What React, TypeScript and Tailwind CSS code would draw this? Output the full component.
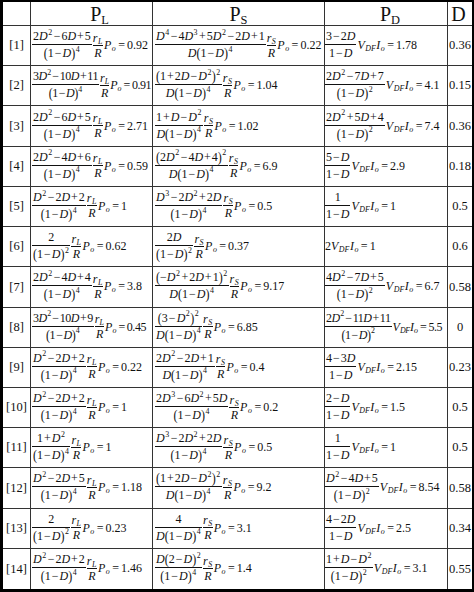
import React from "react";

type Frac3 = [string, string, string];
type Row = {
  pl: Frac3;
  ps: Frac3;
  pd: { n?: string; d?: string; pre?: string; v: string };
  d: string;
  tightL?: boolean;
  tightD?: boolean;
};

const rows: Row[] = [
  { pl: ["2D^2-6D+5", "(1-D)^4", "0.92"], ps: ["D^4-4D^3+5D^2-2D+1", "D(1-D)^4", "0.22"], pd: { n: "3-2D", d: "1-D", v: "1.78" }, d: "0.36" },
  { pl: ["3D^2-10D+11", "(1-D)^4", "0.91"], ps: ["(1+2D-D^2)^2", "D(1-D)^4", "1.04"], pd: { n: "2D^2-7D+7", d: "(1-D)^2", v: "4.1" }, d: "0.15", tightL: true },
  { pl: ["2D^2-6D+5", "(1-D)^4", "2.71"], ps: ["1+D-D^2", "D(1-D)^4", "1.02"], pd: { n: "2D^2+5D+4", d: "(1-D)^2", v: "7.4" }, d: "0.36" },
  { pl: ["2D^2-4D+6", "(1-D)^4", "0.59"], ps: ["(2D^2-4D+4)^2", "D(1-D)^4", "6.9"], pd: { n: "5-D", d: "1-D", v: "2.9" }, d: "0.18" },
  { pl: ["D^2-2D+2", "(1-D)^4", "1"], ps: ["D^3-2D^2+2D", "(1-D)^4", "0.5"], pd: { n: "1", d: "1-D", v: "1" }, d: "0.5" },
  { pl: ["2", "(1-D)^2", "0.62"], ps: ["2D", "(1-D)^2", "0.37"], pd: { pre: "2", v: "1" }, d: "0.6" },
  { pl: ["2D^2-4D+4", "(1-D)^4", "3.8"], ps: ["(-D^2+2D+1)^2", "D(1-D)^4", "9.17"], pd: { n: "4D^2-7D+5", d: "(1-D)^2", v: "6.7" }, d: "0.58" },
  { pl: ["3D^2-10D+9", "(1-D)^4", "0.45"], ps: ["(3-D^2)^2", "D(1-D)^4", "6.85"], pd: { n: "2D^2-11D+11", d: "(1-D)^2", v: "5.5" }, d: "0", tightL: true, tightD: true },
  { pl: ["D^2-2D+2", "(1-D)^4", "0.22"], ps: ["2D^2-2D+1", "D(1-D)^4", "0.4"], pd: { n: "4-3D", d: "1-D", v: "2.15" }, d: "0.23" },
  { pl: ["D^2-2D+2", "(1-D)^4", "1"], ps: ["2D^3-6D^2+5D", "(1-D)^4", "0.2"], pd: { n: "2-D", d: "1-D", v: "1.5" }, d: "0.5" },
  { pl: ["1+D^2", "(1-D)^4", "1"], ps: ["D^3-2D^2+2D", "(1-D)^4", "0.5"], pd: { n: "1", d: "1-D", v: "1" }, d: "0.5" },
  { pl: ["D^2-2D+5", "(1-D)^4", "1.18"], ps: ["(1+2D-D^2)^2", "D(1-D)^4", "9.2"], pd: { n: "D^2-4D+5", d: "(1-D)^2", v: "8.54" }, d: "0.58" },
  { pl: ["2", "(1-D)^2", "0.23"], ps: ["4", "D(1-D)^4", "3.1"], pd: { n: "4-2D", d: "1-D", v: "2.5" }, d: "0.34" },
  { pl: ["D^2-2D+2", "(1-D)^4", "1.46"], ps: ["D(2-D)^2", "(1-D)^4", "1.4"], pd: { n: "1+D-D^2", d: "(1-D)^2", v: "3.1" }, d: "0.55" },
];

// tiny renderer: letters italic, ^digits superscript, _X or _{XY} subscript
function Expr({ s }: { s: string }) {
  const out: React.ReactNode[] = [];
  let i = 0;
  let k = 0;
  let prev = "";
  while (i < s.length) {
    const c = s[i];
    if (c === "^") {
      let j = i + 1;
      while (j < s.length && /\d/.test(s[j])) j++;
      out.push(
        <sup key={k++} className="text-[0.66em] ml-[0.5px] mr-[0.5px] top-[-0.68em]">
          {s.slice(i + 1, j)}
        </sup>
      );
      i = j;
      prev = "^";
      continue;
    }
    if (c === "_") {
      let txt = s[i + 1];
      let j = i + 2;
      if (txt === "{") {
        const e = s.indexOf("}", i);
        txt = s.slice(i + 2, e);
        j = e + 1;
      }
      out.push(
        <sub key={k++} className="text-[0.66em] italic ml-[0.5px] mr-[0.5px]">
          {txt}
        </sub>
      );
      i = j;
      prev = "_";
      continue;
    }
    if (c === "+" || c === "-") {
      const unary = prev === "" || prev === "(";
      out.push(
        <span key={k++} className={unary ? "" : "mx-[1px]"}>
          {c === "-" ? "\u2212" : "+"}
        </span>
      );
    } else if (c === "=") {
      out.push(
        <span key={k++} className="mx-[2px]">
          =
        </span>
      );
    } else if (c === "(" || c === ")") {
      out.push(
        <span key={k++} className="inline-block scale-y-[1.22]">
          {c}
        </span>
      );
    } else if (/[A-Za-z]/.test(c)) {
      out.push(<i key={k++}>{c}</i>);
    } else {
      out.push(<span key={k++}>{c}</span>);
    }
    prev = c;
    i++;
  }
  return <>{out}</>;
}

function Frac({ n, d, small }: { n: string; d: string; small?: boolean }) {
  return (
    <span className="inline-flex flex-col items-center mr-[1px]">
      <span className={small ? "leading-[13px]" : "leading-[15px] px-[1px]"}>
        <Expr s={n} />
      </span>
      <span className="w-full border-t border-[#111]" />
      <span className={small ? "leading-[14px]" : "leading-[17px] px-[1px]"}>
        <Expr s={d} />
      </span>
    </span>
  );
}

function Tail({ s }: { s: string }) {
  return (
    <span className="leading-[15px] whitespace-nowrap">
      <Expr s={s} />
    </span>
  );
}

const cell = "flex items-center border-r border-b border-[#333] overflow-hidden whitespace-nowrap";

export default function App() {
  return (
    <div
      className="w-[474px] h-[592px] bg-white text-[#111] border-l-[3px] border-t-2 border-r-2 border-b-[3px] border-black grid grid-cols-[28px_122px_172px_123px_24px] grid-rows-[24px_repeat(14,1fr)] text-[12px]"
      style={{ fontFamily: '"Liberation Serif", "Times New Roman", serif' }}
    >
      <div className={cell} />
      <div className={`${cell} justify-center text-[20px] leading-none pl-[16px]`}>
        <span>
          P<sub className="text-[0.62em]">L</sub>
        </span>
      </div>
      <div className={`${cell} justify-center text-[20px] leading-none`}>
        <span>
          P<sub className="text-[0.62em]">S</sub>
        </span>
      </div>
      <div className={`${cell} justify-center text-[20px] leading-none pl-[8px]`}>
        <span>
          P<sub className="text-[0.62em]">D</sub>
        </span>
      </div>
      <div className="flex items-center justify-center border-b border-[#333] text-[20px] leading-none pr-[3px]">
        D
      </div>

      {rows.map((r, idx) => {
        const last = idx === rows.length - 1;
        const c = last ? cell.replace("border-b ", "") : cell;
        return (
          <React.Fragment key={idx}>
            <div className={`${c} justify-center text-[12.5px]`}>[{idx + 1}]</div>
            <div className={`${c} pl-[1px] ${r.tightL ? "tracking-[-0.45px]" : ""}`}>
              <Frac n={r.pl[0]} d={r.pl[1]} />
              <Frac n="r_L" d="R" small />
              <Tail s={`P_o=${r.pl[2]}`} />
            </div>
            <div className={`${c} pl-[2px]`}>
              <Frac n={r.ps[0]} d={r.ps[1]} />
              <Frac n="r_S" d="R" small />
              <Tail s={`P_o=${r.ps[2]}`} />
            </div>
            <div className={`${c} ${r.tightD ? "tracking-[-0.45px]" : ""}`}>
              {r.pd.n && r.pd.d ? <Frac n={r.pd.n} d={r.pd.d} /> : null}
              <Tail s={`${r.pd.pre ?? ""}V_{DF}I_o=${r.pd.v}`} />
            </div>
            <div className={`flex items-center justify-center text-[12.5px] ${last ? "" : "border-b border-[#333]"}`}>
              {r.d}
            </div>
          </React.Fragment>
        );
      })}
    </div>
  );
}
